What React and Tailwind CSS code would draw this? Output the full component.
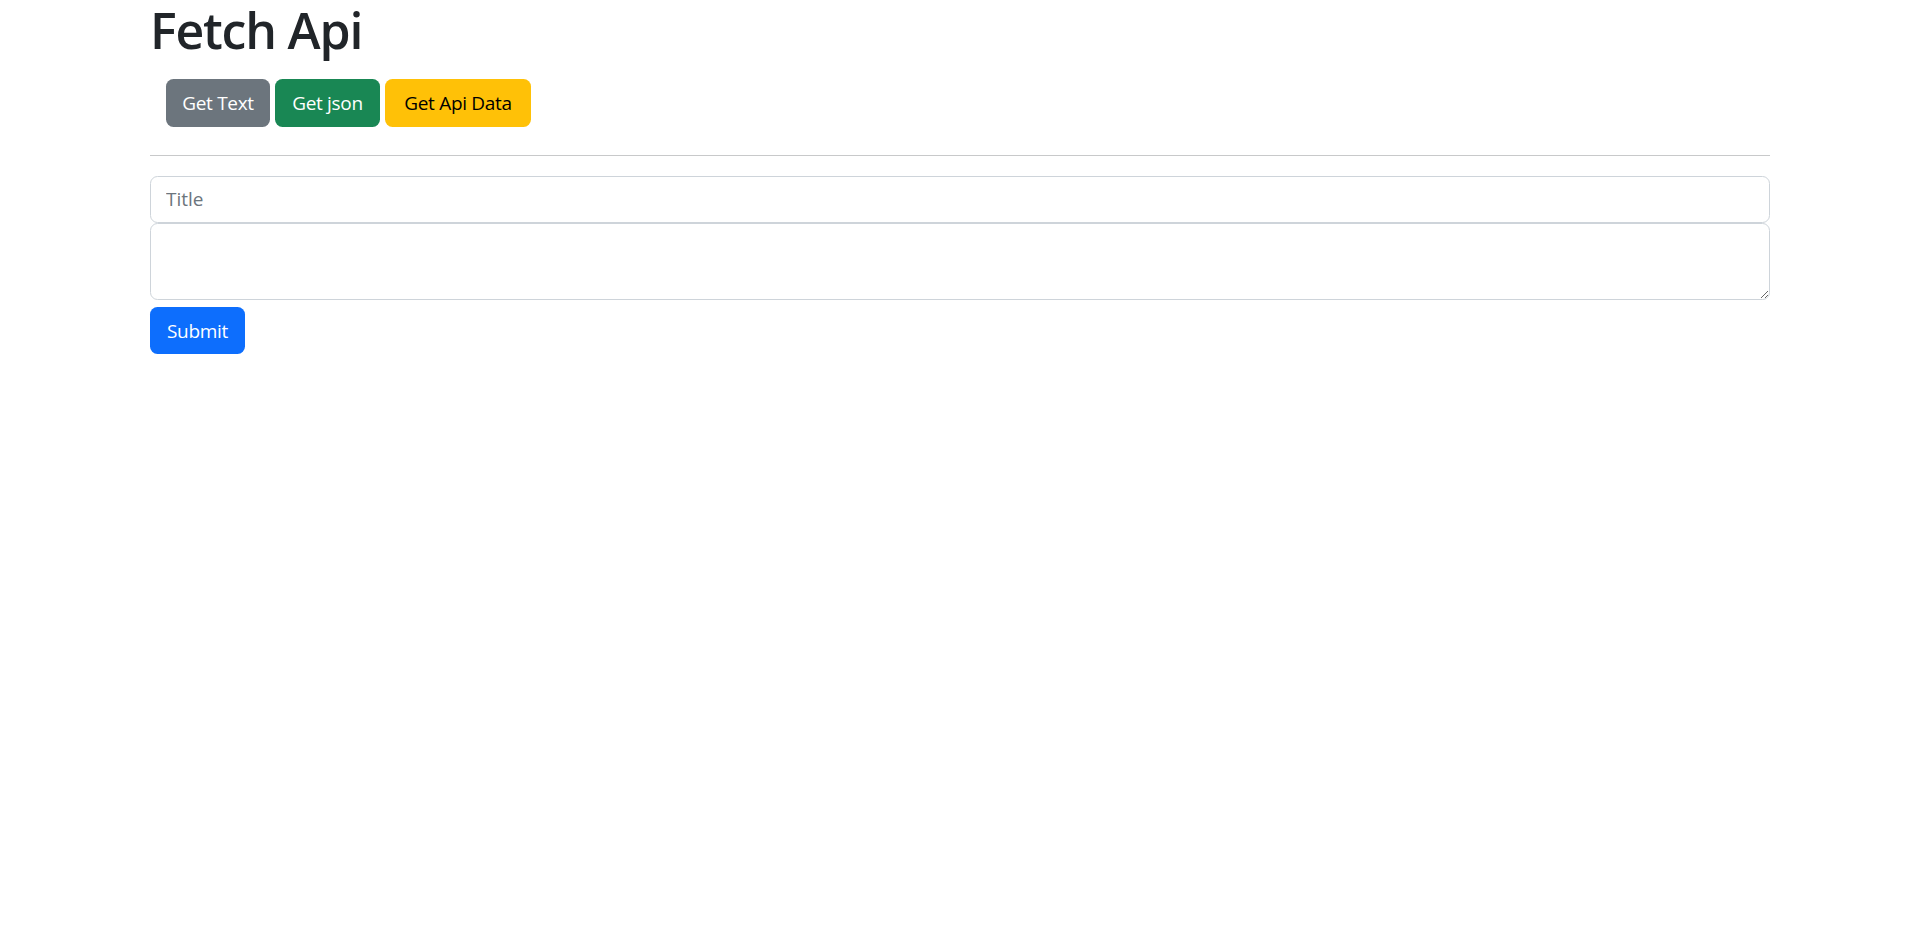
import React from "react";

export default function App() {
  return (
    <div className="min-h-[942px] bg-white font-['Segoe_UI','Open_Sans','Noto_Sans',sans-serif] text-[#212529]">
      <div className="w-[1620px] mx-auto">
        <h1 className="text-[50px] leading-[60px] font-semibold mb-[10px] tracking-[-1.2px]">Fetch Api</h1>
        <div className="flex gap-[5px] pl-[16px] pt-[9px]">
          <button className="flex items-center justify-center whitespace-nowrap h-[47.5px] rounded-[7.5px] bg-[#6c757d] text-white text-[19px] leading-[30px] tracking-[-0.3px] w-[104px]">Get Text</button>
          <button className="flex items-center justify-center whitespace-nowrap h-[47.5px] rounded-[7.5px] bg-[#198754] text-white text-[19px] leading-[30px] tracking-[-0.3px] w-[105px]">Get json</button>
          <button className="flex items-center justify-center whitespace-nowrap h-[47.5px] rounded-[7.5px] bg-[#ffc107] text-black text-[19px] leading-[30px] tracking-[-0.3px] w-[146px]">Get Api Data</button>
        </div>
        <hr className="mt-[28px] border-0 border-t border-[#c8c9ca]" />
        <form className="mt-[20px]" onSubmit={(e) => e.preventDefault()}>
          <input
            type="text"
            placeholder="Title"
            className="block w-full h-[47.5px] px-[15px] text-[19px] leading-[30px] border border-[#ced4da] rounded-[7.5px] outline-none placeholder:text-[#6c757d]"
          />
          <textarea
            rows={2}
            className="block w-full h-[77px] px-[15px] py-[7.5px] text-[19px] leading-[30px] border border-[#ced4da] rounded-[7.5px] outline-none"
          />
          <button type="submit" className="mt-[7px] flex items-center justify-center whitespace-nowrap h-[47px] w-[95px] rounded-[7.5px] bg-[#0d6efd] text-white text-[19px] leading-[30px] tracking-[-0.3px]">Submit</button>
        </form>
      </div>
    </div>
  );
}
